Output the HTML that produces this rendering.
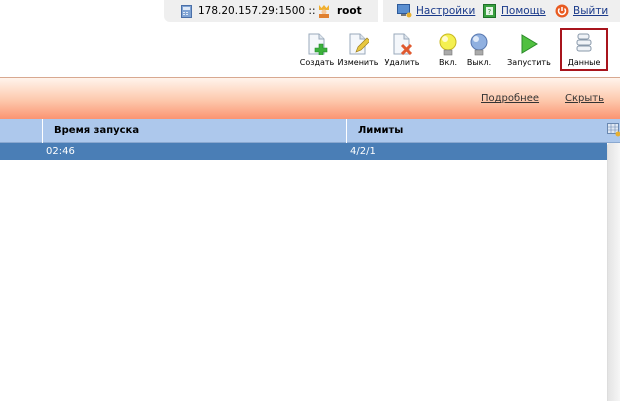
<!DOCTYPE html>
<html><head><meta charset="utf-8"><style>
*{margin:0;padding:0;box-sizing:border-box}
body{width:620px;height:401px;background:#fff;position:relative;overflow:hidden;font-family:"DejaVu Sans","Liberation Sans",sans-serif;font-size:10px;color:#000}
.abs{position:absolute}
.box{background:#efefef;top:0;height:22px}
a{color:#1a3a8a;text-decoration:underline}
.lbl{position:absolute;top:58px;font-size:8px;white-space:nowrap;transform:translateX(-50%)}
.ic{position:absolute;top:33px}
</style></head><body>
<div class="abs box" style="left:164px;width:214px;border-bottom-left-radius:6px"></div>
<div class="abs box" style="left:383px;width:237px"></div>
<svg class="abs" style="left:181px;top:5px" width="11" height="13"><rect x="0.5" y="0.5" width="10" height="12" fill="#7fa3d4" stroke="#4a6fa8"/><rect x="2" y="2" width="7" height="3" fill="#dfe9f7"/><g fill="#dfe9f7"><rect x="2" y="7" width="2" height="1"/><rect x="5" y="7" width="2" height="1"/><rect x="2" y="9" width="2" height="1"/><rect x="5" y="9" width="2" height="1"/></g></svg>
<div class="abs" style="left:198px;top:5px;font-size:10.5px">178.20.157.29:1500 ::</div>
<svg class="abs" style="left:318px;top:4px" width="12" height="14"><path d="M1 1l2.5 3L6 1l2.5 3L11 1v5H1z" fill="#f0b030"/><circle cx="6" cy="8" r="2.5" fill="#f6c89a"/><rect x="1" y="10" width="10" height="4" fill="#e08030"/></svg>
<div class="abs" style="left:337px;top:5px;font-size:10.5px;font-weight:bold">root</div>
<svg class="abs" style="left:397px;top:4px" width="15" height="14"><rect x="0.5" y="0.5" width="12" height="9" fill="#5b8fd0" stroke="#2d5a9a"/><rect x="4" y="10" width="5" height="2" fill="#777"/><circle cx="12" cy="11" r="2.5" fill="#e8b030"/></svg>
<a class="abs" style="left:416px;top:5px;font-size:10.5px">Настройки</a>
<svg class="abs" style="left:483px;top:4px" width="13" height="14"><rect x="0.5" y="0.5" width="12" height="13" fill="#3aa040" stroke="#1e7028"/><rect x="3" y="3" width="7" height="8" fill="#e8f6e8"/><text x="4.5" y="10" font-size="7" fill="#2a8a30" font-family="DejaVu Sans">?</text></svg>
<a class="abs" style="left:501px;top:5px;font-size:10.5px">Помощь</a>
<svg class="abs" style="left:555px;top:4px" width="14" height="14"><circle cx="7" cy="7" r="6.5" fill="#e85a20"/><path d="M4.5 4.5a3.5 3.5 0 1 0 5 0M7 3v4" stroke="#fff" stroke-width="1.5" fill="none"/></svg>
<a class="abs" style="left:573px;top:5px;font-size:10.5px">Выйти</a>

<!-- toolbar icons -->
<svg class="ic" style="left:306px" width="22" height="22"><path d="M3 1h10l5 5v15H3z" fill="#f4f7fb" stroke="#9aaabb"/><path d="M13 1v5h5" fill="#dde4ec" stroke="#9aaabb"/><path d="M13 11h4v4h4v4h-4v4h-4v-4H9v-4h4z" fill="#3cb03c" stroke="#1f8a28" stroke-width=".6"/></svg>
<svg class="ic" style="left:347px" width="22" height="22"><path d="M3 1h10l5 5v15H3z" fill="#f4f7fb" stroke="#9aaabb"/><path d="M13 1v5h5" fill="#dde4ec" stroke="#9aaabb"/><path d="M9 19l2-5 9-9 3 3-9 9z" fill="#e8c840" stroke="#a08020" stroke-width=".7"/></svg>
<svg class="ic" style="left:391px" width="22" height="22"><path d="M3 1h10l5 5v15H3z" fill="#f4f7fb" stroke="#9aaabb"/><path d="M13 1v5h5" fill="#dde4ec" stroke="#9aaabb"/><path d="M11 12l9 9M20 12l-9 9" stroke="#e05a30" stroke-width="3"/></svg>
<svg class="ic" style="left:438px" width="20" height="24"><circle cx="10" cy="9" r="8" fill="#f4f050" stroke="#c8b820"/><circle cx="7" cy="6" r="3" fill="#fffbd0"/><rect x="6" y="17" width="8" height="5" fill="#aaa" stroke="#777" stroke-width=".6"/></svg>
<svg class="ic" style="left:469px" width="20" height="24"><circle cx="10" cy="9" r="8" fill="#90b0e0" stroke="#5878b0"/><circle cx="7" cy="6" r="3" fill="#e0eaf8"/><rect x="6" y="17" width="8" height="5" fill="#aaa" stroke="#777" stroke-width=".6"/></svg>
<svg class="ic" style="left:519px" width="20" height="22"><path d="M3 2l15 9-15 9z" fill="#50c040" stroke="#2a8a28"/></svg>
<svg class="ic" style="left:574px" width="20" height="22"><g fill="#f0f3f7" stroke="#8898aa"><rect x="4" y="1" width="11" height="5" rx="2"/><rect x="3" y="7" width="14" height="5" rx="2"/><rect x="3" y="13" width="14" height="5" rx="2"/></g></svg>
<div class="abs" style="left:560px;top:28px;width:48px;height:43px;border:2px solid #a8141c"></div>
<span class="lbl" style="left:317px">Создать</span>
<span class="lbl" style="left:358px">Изменить</span>
<span class="lbl" style="left:402px">Удалить</span>
<span class="lbl" style="left:448px">Вкл.</span>
<span class="lbl" style="left:479px">Выкл.</span>
<span class="lbl" style="left:529px">Запустить</span>
<span class="lbl" style="left:584px">Данные</span>

<!-- orange band -->
<div class="abs" style="left:0;top:77px;width:620px;height:42px;border-top:1px solid #d8a890;background:linear-gradient(#fff4ec,#fdc8ac 55%,#fb9472)"></div>
<a class="abs" style="left:481px;top:93px;color:#333">Подробнее</a>
<a class="abs" style="left:565px;top:93px;color:#333">Скрыть</a>

<!-- table -->
<div class="abs" style="left:0;top:119px;width:620px;height:24px;background:#adc8ec;border-bottom:1px solid #8aa8d0"></div>
<div class="abs" style="left:42px;top:119px;width:1px;height:41px;background:#fff"></div>
<div class="abs" style="left:346px;top:119px;width:1px;height:41px;background:#fff"></div>
<div class="abs" style="left:54px;top:125px;font-weight:bold">Время запуска</div>
<div class="abs" style="left:358px;top:125px;font-weight:bold">Лимиты</div>
<svg class="abs" style="left:607px;top:123px" width="13" height="14"><rect x="0.5" y="0.5" width="11" height="10" fill="#dfe8f4" stroke="#6a88b0"/><path d="M0 4h12M0 7h12M4 0v11M8 0v11" stroke="#6a88b0" stroke-width=".6"/><circle cx="11" cy="11" r="2.5" fill="#e8b030"/></svg>
<div class="abs" style="left:0;top:143px;width:607px;height:17px;background:#4a7eb6"></div>
<div class="abs" style="left:46px;top:146px;color:#fff">02:46</div>
<div class="abs" style="left:350px;top:146px;color:#fff">4/2/1</div>
<div class="abs" style="left:607px;top:143px;width:13px;height:258px;background:linear-gradient(90deg,#e4e4e4,#f6f6f6);border-left:1px solid #ddd;border-top-left-radius:3px"></div>
</body></html>
